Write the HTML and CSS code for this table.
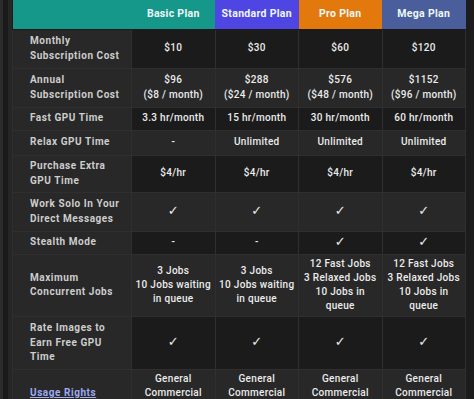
FILE: index.html
```html
<!DOCTYPE html>
<html>
<head>
<meta charset="utf-8">
<link rel="stylesheet" href="styles.css">
</head>
<body>
<div class="frame">
<table class="plans">
  <colgroup>
    <col class="c-label"><col class="c-plan"><col class="c-plan"><col class="c-plan"><col class="c-plan">
  </colgroup>
  <thead>
    <tr class="h-row">
      <th class="h-teal"></th>
      <th class="h-teal">Basic Plan</th>
      <th class="h-indigo">Standard Plan</th>
      <th class="h-orange">Pro Plan</th>
      <th class="h-slate">Mega Plan</th>
    </tr>
  </thead>
  <tbody>
    <tr class="dark r39">
      <th>Monthly<br>Subscription Cost</th>
      <td>$10</td><td>$30</td><td>$60</td><td>$120</td>
    </tr>
    <tr class="light r39">
      <th>Annual<br>Subscription Cost</th>
      <td>$96<br>($8 / month)</td><td>$288<br>($24 / month)</td><td>$576<br>($48 / month)</td><td>$1152<br>($96 / month)</td>
    </tr>
    <tr class="dark r23">
      <th>Fast GPU Time</th>
      <td>3.3 hr/month</td><td>15 hr/month</td><td>30 hr/month</td><td>60 hr/month</td>
    </tr>
    <tr class="light r25">
      <th>Relax GPU Time</th>
      <td>-</td><td>Unlimited</td><td>Unlimited</td><td>Unlimited</td>
    </tr>
    <tr class="dark r37">
      <th>Purchase Extra<br>GPU Time</th>
      <td>$4/hr</td><td>$4/hr</td><td>$4/hr</td><td>$4/hr</td>
    </tr>
    <tr class="light r39">
      <th>Work Solo In Your<br>Direct Messages</th>
      <td><span class="check">✓</span></td><td><span class="check">✓</span></td><td><span class="check">✓</span></td><td><span class="check">✓</span></td>
    </tr>
    <tr class="dark r23">
      <th>Stealth Mode</th>
      <td>-</td><td>-</td><td><span class="check">✓</span></td><td><span class="check">✓</span></td>
    </tr>
    <tr class="light r61">
      <th>Maximum<br>Concurrent Jobs</th>
      <td>3 Jobs<br>10 Jobs waiting<br>in queue</td>
      <td>3 Jobs<br>10 Jobs waiting<br>in queue</td>
      <td>12 Fast Jobs<br>3 Relaxed Jobs<br>10 Jobs in<br>queue</td>
      <td>12 Fast Jobs<br>3 Relaxed Jobs<br>10 Jobs in<br>queue</td>
    </tr>
    <tr class="dark r53">
      <th>Rate Images to<br>Earn Free GPU<br>Time</th>
      <td><span class="check">✓</span></td><td><span class="check">✓</span></td><td><span class="check">✓</span></td><td><span class="check">✓</span></td>
    </tr>
    <tr class="light r46">
      <th><a class="link" href="#">Usage Rights</a></th>
      <td>General<br>Commercial<br>Terms</td><td>General<br>Commercial<br>Terms</td><td>General<br>Commercial<br>Terms</td><td>General<br>Commercial<br>Terms</td>
    </tr>
  </tbody>
</table>
</div>
</body>
</html>
```

FILE: styles.css
```css
html, body {
  margin: 0;
  padding: 0;
  background: #1c1c1c;
  overflow: hidden;
}
body {
  width: 474px;
  height: 399px;
}
.frame {
  display: flex;
  padding-left: 12px;
  background: linear-gradient(to right, #2c2c2c 0, #2c2c2c 3px, #1a1a1a 3px, #1a1a1a 8px, #262626 8px, #262626 12px, transparent 12px);
  height: 399px;
  box-sizing: border-box;
}
.plans {
  border-collapse: collapse;
  table-layout: fixed;
  width: 453px;
  font-family: Roboto, "Liberation Sans", sans-serif;
  font-size: 10px;
  line-height: 14.3px;
  letter-spacing: 0.3px;
}
.c-label { width: 119px; }
.c-plan { width: 83.5px; }
.plans th, .plans td {
  padding: 2px 1px;
  vertical-align: middle;
  border: 1px solid #2f2f2f;
  white-space: nowrap;
}
.h-row { height: 29px; }
.plans .h-row th {
  text-align: center;
  font-weight: 700;
  font-size: 10.5px;
  color: #eef8f7;
  border: none;
  border-bottom: 1px solid #1a1a1a;
}
.h-teal { background: #15978a; }
.h-indigo { background: #4e45e2; }
.h-orange { background: #e3780d; }
.h-slate { background: #4b5e9c; }

.plans tbody th {
  text-align: left;
  padding-left: 17px;
  font-weight: 700;
  letter-spacing: 0.55px;
  color: #cdcdcd;
  background: #282828;
}
.plans tbody td {
  text-align: center;
  font-weight: 500;
  color: #ececec;
}
.check {
  font-size: 13px;
  font-family: "DejaVu Sans", sans-serif;
  letter-spacing: 0;
}
.dark td { background: #1b1b1b; }
.light td { background: #282828; }
.r23 { height: 23px; }
.r25 { height: 25px; }
.r37 { height: 37px; }
.r39 { height: 39px; }
.r46 { height: 46px; }
.r53 { height: 53px; }
.r61 { height: 61px; }
.link {
  color: #9eabf2;
  text-decoration: underline;
}
```
